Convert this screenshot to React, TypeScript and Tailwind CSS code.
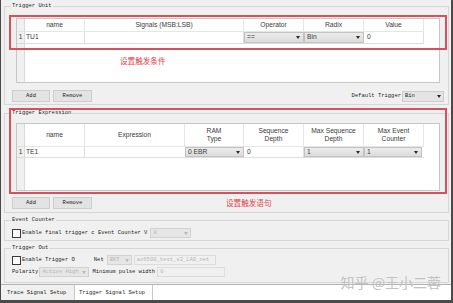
import React from "react";

const MONO =
  "font-['Liberation_Mono','DejaVu_Sans_Mono',monospace] text-[5.5px] leading-[8px] text-[#1e1e1e] whitespace-nowrap";
const MONO_DIS =
  "font-['Liberation_Mono','DejaVu_Sans_Mono',monospace] text-[5.5px] leading-[8px] text-[#b4b4b4] whitespace-nowrap";
const SANS =
  "font-['Liberation_Sans',Arial,sans-serif] text-[6.7px] leading-[8.5px] text-[#3a3a3a] whitespace-nowrap";
const RED =
  "font-['Noto_Sans_CJK_SC','Noto_Sans',sans-serif] text-[7.6px] leading-[10px] text-[#e0424c] whitespace-nowrap";

function Arrow({ color = "#2a2a2a" }: { color?: string }) {
  return (
    <svg width="4" height="3" viewBox="0 0 4 3" className="shrink-0">
      <path d="M0 0H4L2 3Z" fill={color} />
    </svg>
  );
}

function CellCombo({ text, className }: { text: string; className: string }) {
  return (
    <div
      className={
        "flex items-center justify-between h-full bg-gradient-to-b from-[#ececec] to-[#dcdcdc] border border-[#c2c2c2] pl-[2px] pr-[3px] " +
        className
      }
    >
      <span className={SANS}>{text}</span>
      <Arrow />
    </div>
  );
}

function DisCombo({ text, className }: { text: string; className: string }) {
  return (
    <div
      className={
        "flex items-center justify-between h-[10px] bg-[#e6e6e6] border border-[#d2d2d2] pl-[2px] pr-[2px] " +
        className
      }
    >
      <span className={MONO_DIS}>{text}</span>
      <Arrow color="#b8b8b8" />
    </div>
  );
}

function Button({ label, className }: { label: string; className: string }) {
  return (
    <div
      className={
        "h-[12px] flex items-center justify-center bg-[#e3e3e3] border border-[#cdcdcd] " +
        className
      }
    >
      <span className={MONO}>{label}</span>
    </div>
  );
}

function Check() {
  return <div className="w-[9px] h-[9px] bg-white border border-[#3a3a3a] shrink-0" />;
}

export default function App() {
  return (
    <div className="relative w-[453px] h-[303px] overflow-hidden bg-[#f0f0f0] border-l border-r-2 border-b-[3px] border-[#4a4a4a] flex flex-col">
      {/* Trigger Unit */}
      <fieldset className="mt-[2px] ml-[3px] w-[445px] h-[103px] border border-[#d6d6d6]">
        <legend className={"ml-[6px] px-[1px] " + MONO}>Trigger Unit</legend>
        <div className="ml-[11px] mt-[8px] w-[424px] h-[65px] border border-[#c6c6c6] bg-white flex">
          <div className="w-[8px] h-full bg-[#f0f0f0] border-r border-[#dadada] flex flex-col">
            <div className="h-[13px] border-b border-[#e4e4e4]" />
            <div className="h-[12px] border-b border-[#dadada] flex items-center justify-center">
              <span className={SANS}>1</span>
            </div>
          </div>
          <div className="flex-1 flex flex-col">
            <div className="flex h-[13px]">
              <div className="w-[60px] border-r border-b border-[#e6e6e6] flex items-center justify-center">
                <span className={SANS}>name</span>
              </div>
              <div className="w-[159px] border-r border-b border-[#e6e6e6] flex items-center justify-center">
                <span className={SANS}>Signals (MSB:LSB)</span>
              </div>
              <div className="w-[60px] border-r border-b border-[#e6e6e6] flex items-center justify-center">
                <span className={SANS}>Operator</span>
              </div>
              <div className="w-[60px] border-r border-b border-[#e6e6e6] flex items-center justify-center">
                <span className={SANS}>Radix</span>
              </div>
              <div className="w-[60px] border-r border-b border-[#e6e6e6] flex items-center justify-center">
                <span className={SANS}>Value</span>
              </div>
              <div className="flex-1" />
            </div>
            <div className="flex h-[12px]">
              <div className="w-[60px] border-r border-b border-[#dedede] flex items-center pl-[1px]">
                <span className={SANS}>TU1</span>
              </div>
              <div className="w-[159px] border-r border-b border-[#dedede]" />
              <div className="w-[60px] border-b border-[#dedede]">
                <CellCombo text="==" className="w-[60px]" />
              </div>
              <div className="w-[60px] border-b border-[#dedede]">
                <CellCombo text="Bin" className="w-[60px]" />
              </div>
              <div className="w-[60px] border-r border-b border-[#dedede] flex items-center pl-[3px]">
                <span className={SANS}>0</span>
              </div>
              <div className="flex-1" />
            </div>
            <div className={"pl-[95px] mt-[12px] " + RED}>设置触发条件</div>
          </div>
        </div>
        <div className="mt-[7px] flex items-center pl-[7px] pr-[4px]">
          <Button label="Add" className="w-[38px]" />
          <Button label="Remove" className="w-[39px] ml-[3px]" />
          <div className="ml-auto flex items-center">
            <span className={MONO}>Default Trigger</span>
            <div className="ml-[1px] w-[42px] h-[11px] flex items-center justify-between bg-[#e4e4e4] border border-[#cdcdcd] pl-[2px] pr-[2px]">
              <span className={MONO}>Bin</span>
              <Arrow />
            </div>
          </div>
        </div>
      </fieldset>

      {/* Trigger Expression */}
      <fieldset className="mt-[4px] ml-[3px] w-[445px] h-[104px] border border-[#d6d6d6]">
        <legend className={"ml-[6px] px-[1px] " + MONO}>Trigger Expression</legend>
        <div className="ml-[11px] mt-[6px] w-[424px] h-[68px] border border-[#c6c6c6] bg-white flex">
          <div className="w-[8px] h-full bg-[#f0f0f0] border-r border-[#dadada] flex flex-col">
            <div className="h-[23px] border-b border-[#e4e4e4]" />
            <div className="h-[11px] border-b border-[#dadada] flex items-center justify-center">
              <span className={SANS}>1</span>
            </div>
          </div>
          <div className="flex-1 flex flex-col">
            <div className="flex h-[23px]">
              <div className="w-[60px] border-r border-b border-[#e6e6e6] flex items-center justify-center">
                <span className={SANS}>name</span>
              </div>
              <div className="w-[100px] border-r border-b border-[#e6e6e6] flex items-center justify-center">
                <span className={SANS}>Expression</span>
              </div>
              <div className="w-[59px] border-r border-b border-[#e6e6e6] flex flex-col items-center justify-center">
                <span className={SANS}>RAM</span>
                <span className={SANS}>Type</span>
              </div>
              <div className="w-[60px] border-r border-b border-[#e6e6e6] flex flex-col items-center justify-center">
                <span className={SANS}>Sequence</span>
                <span className={SANS}>Depth</span>
              </div>
              <div className="w-[60px] border-r border-b border-[#e6e6e6] flex flex-col items-center justify-center">
                <span className={SANS}>Max Sequence</span>
                <span className={SANS}>Depth</span>
              </div>
              <div className="w-[60px] border-r border-b border-[#e6e6e6] flex flex-col items-center justify-center">
                <span className={SANS}>Max Event</span>
                <span className={SANS}>Counter</span>
              </div>
              <div className="flex-1" />
            </div>
            <div className="flex h-[11px]">
              <div className="w-[60px] border-r border-b border-[#dedede] flex items-center pl-[1px]">
                <span className={SANS}>TE1</span>
              </div>
              <div className="w-[100px] border-b border-[#dedede]" />
              <div className="w-[59px] border-b border-[#dedede]">
                <CellCombo text="0 EBR" className="w-[59px]" />
              </div>
              <div className="w-[60px] border-r border-b border-[#dedede] flex items-center pl-[3px]">
                <span className={SANS}>0</span>
              </div>
              <div className="w-[60px] border-b border-[#dedede]">
                <CellCombo text="1" className="w-[60px]" />
              </div>
              <div className="w-[60px] border-b border-[#dedede] pr-[2px]">
                <CellCombo text="1" className="w-[58px]" />
              </div>
              <div className="flex-1" />
            </div>
          </div>
        </div>
        <div className="mt-[6px] flex items-center pl-[7px]">
          <Button label="Add" className="w-[38px]" />
          <Button label="Remove" className="w-[39px] ml-[3px]" />
          <span className={"ml-[134px] " + RED}>设置触发语句</span>
        </div>
      </fieldset>

      {/* Event Counter */}
      <fieldset className="mt-[3px] ml-[3px] w-[445px] h-[25px] border border-[#d6d6d6]">
        <legend className={"ml-[6px] px-[1px] " + MONO}>Event Counter</legend>
        <div className="mt-[4px] h-[10px] flex items-center pl-[7px]">
          <Check />
          <span className={"ml-[1px] " + MONO}>Enable final trigger c Event Counter V</span>
          <DisCombo text="8" className="ml-[3px] w-[41px]" />
        </div>
      </fieldset>

      {/* Trigger Out */}
      <fieldset className="mt-[3px] ml-[3px] w-[445px] h-[39px] border border-[#d6d6d6]">
        <legend className={"ml-[6px] px-[1px] " + MONO}>Trigger Out</legend>
        <div className="mt-[3px] h-[10px] flex items-center pl-[7px]">
          <Check />
          <span className={"ml-[1px] " + MONO}>Enable Trigger O</span>
          <span className={"ml-[19px] " + MONO}>Net</span>
          <DisCombo text="BKT" className="ml-[3px] w-[25px]" />
          <div className="ml-[2px] w-[82px] h-[10px] flex items-center bg-[#f0f0f0] border border-[#dcdcdc] pl-[2px]">
            <span className={MONO_DIS}>ax6500_test_v2_LA0_net</span>
          </div>
        </div>
        <div className="mt-[2px] h-[10px] flex items-center pl-[7px]">
          <span className={MONO}>Polarity</span>
          <DisCombo text="Active High" className="ml-[1px] w-[50px]" />
          <span className={"ml-[3px] " + MONO}>Minimum pulse width</span>
          <div className="ml-[2px] w-[68px] h-[10px] flex items-center bg-[#f0f0f0] border border-[#dcdcdc] pl-[2px]">
            <span className={MONO_DIS}>0</span>
          </div>
        </div>
      </fieldset>

      {/* Tab bar */}
      <div className="mt-[1px] h-[16px] border-t border-[#b4b4b4] flex">
        <div className="w-[73px] bg-[#f0f0f0] flex items-center pl-[6px]">
          <span className={MONO}>Trace Signal Setup</span>
        </div>
        <div className="w-[79px] bg-white border-l border-r border-[#c8c8c8] flex items-center pl-[4px]">
          <span className={MONO}>Trigger Signal Setup</span>
        </div>
        <div className="flex-1 bg-white" />
      </div>

      {/* Annotations */}
      <div className="absolute left-[8px] top-[15px] w-[438px] h-[35px] border-2 border-[#d9505b]" />
      <div className="absolute left-[8px] top-[108px] w-[438px] h-[86px] border-2 border-[#d9505b]" />
      <div className="absolute right-[10px] bottom-[10px] font-['Noto_Sans_CJK_SC',sans-serif] text-[14px] leading-[16px] text-[#c2c2c2] whitespace-nowrap">
        知乎 @王小二蓉
      </div>
    </div>
  );
}
